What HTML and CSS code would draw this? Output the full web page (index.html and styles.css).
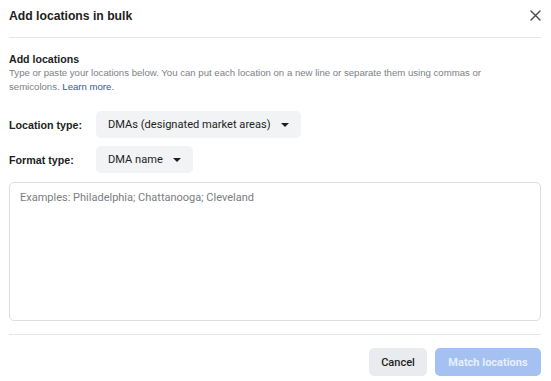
FILE: index.html
```html
<!DOCTYPE html>
<html>
<head>
<meta charset="utf-8">
<link rel="stylesheet" href="styles.css">
</head>
<body>
<div class="dialog">
  <header class="head">
    <h1 class="title">Add locations in bulk</h1>
    <svg class="close" width="11" height="11" viewBox="0 0 11 11"><path d="M1 1L10 10M10 1L1 10" stroke="#444950" stroke-width="1.4" stroke-linecap="round"/></svg>
  </header>
  <section class="intro">
    <h2 class="subtitle">Add locations</h2>
    <p class="desc"><span class="line">Type or paste your locations below. You can put each location on a new line or separate them using commas or</span><span class="line">semicolons. <a class="link" href="#">Learn more.</a></span></p>
  </section>
  <div class="fields">
    <div class="row">
      <span class="label">Location type:</span>
      <span class="select">DMAs (designated market areas)<i class="caret"></i></span>
    </div>
    <div class="row">
      <span class="label">Format type:</span>
      <span class="select">DMA name<i class="caret"></i></span>
    </div>
  </div>
  <div class="area"><span class="placeholder">Examples: Philadelphia; Chattanooga; Cleveland</span></div>
  <footer class="foot">
    <button class="btn cancel">Cancel</button>
    <button class="btn primary">Match locations</button>
  </footer>
</div>
</body>
</html>
```
FILE: styles.css
```css
html, body { margin: 0; padding: 0; background: #fff; }
body { font-family: "Liberation Sans", Arial, sans-serif; color: #1c1e21; }
.dialog { width: 532px; padding: 0 10px 0 9px; }
.head { height: 37px; display: flex; align-items: center; justify-content: space-between; border-bottom: 1px solid #e4e6eb; }
.title { margin: 0; font-size: 12.2px; font-weight: bold; color: #1c1e21; position: relative; top: -3px; }
.close { position: relative; top: -3px; }
.intro { padding-top: 14px; }
.subtitle { margin: 0; font-size: 10.6px; font-weight: bold; line-height: 14px; color: #1c1e21; }
.desc { margin: 0; font-size: 9.6px; line-height: 13.5px; color: #7b7f86; }
.line { display: block; white-space: nowrap; }
.link { color: #385898; text-decoration: none; }
.fields { padding-top: 18px; display: flex; flex-direction: column; gap: 8px; }
.row { display: flex; align-items: center; }
.label { width: 87px; font-size: 10.7px; font-weight: bold; color: #1c1e21; }
.select { display: inline-flex; align-items: center; height: 27px; padding: 0 12px 0 12px; background: #f2f3f5; border-radius: 5px; font-family: Roboto, "Liberation Sans", sans-serif; font-size: 11.1px; color: #1c1e21; }
.caret { display: inline-block; margin-left: 10px; width: 0; height: 0; border-left: 4px solid transparent; border-right: 4px solid transparent; border-top: 4.5px solid #1c1e21; }
.area { margin-top: 9px; height: 139px; border: 1px solid #dadde1; border-radius: 5px; padding: 4px 10px; box-sizing: border-box; }
.placeholder { font-family: Roboto, "Liberation Sans", sans-serif; font-size: 11px; color: #7a7d82; }
.foot { margin-top: 13px; border-top: 1px solid #e4e6eb; padding-top: 13px; display: flex; justify-content: flex-end; gap: 8px; }
.btn { height: 28px; border: none; border-radius: 5px; font-family: Roboto, "Liberation Sans", sans-serif; font-size: 11px; font-weight: 500; padding: 0; white-space: nowrap; }
.cancel { width: 58px; background: #e9ebee; color: #1c1e21; }
.primary { width: 106px; background: #a4c1f2; color: #e6effd; font-weight: bold; }
```
